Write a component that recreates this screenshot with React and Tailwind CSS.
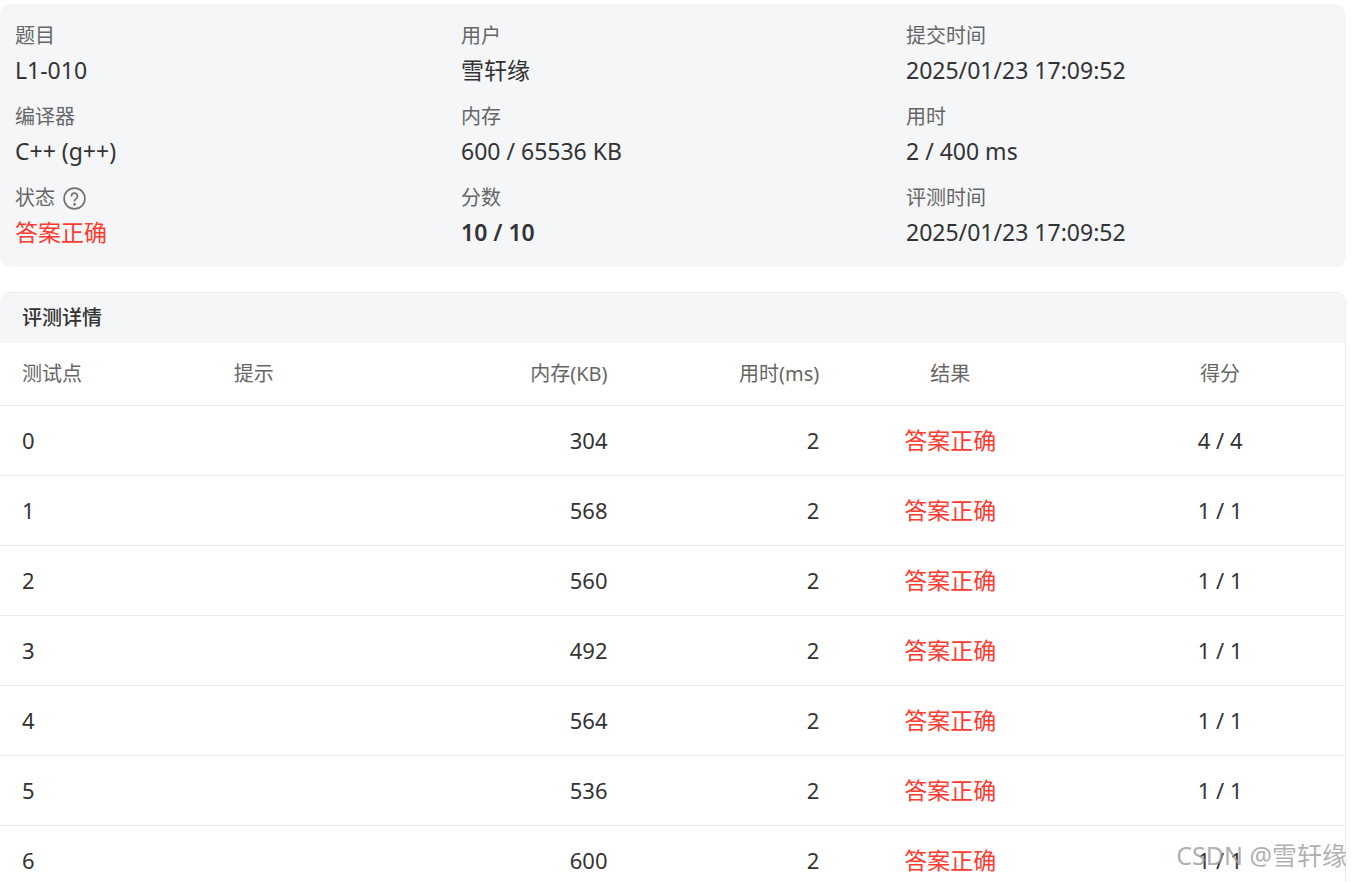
import React from 'react';

const FONT = { fontFamily: '"Noto Sans", "Noto Sans CJK SC", sans-serif' };

const info = [
  { label: '题目', value: 'L1-010' },
  { label: '用户', value: '雪轩缘' },
  { label: '提交时间', value: '2025/01/23 17:09:52' },
  { label: '编译器', value: 'C++ (g++)' },
  { label: '内存', value: '600 / 65536 KB' },
  { label: '用时', value: '2 / 400 ms' },
  { label: '状态', value: '答案正确', help: true, red: true },
  { label: '分数', value: '10 / 10', bold: true },
  { label: '评测时间', value: '2025/01/23 17:09:52' },
];

const rows = [
  { id: 0, mem: 304, time: 2, score: '4 / 4' },
  { id: 1, mem: 568, time: 2, score: '1 / 1' },
  { id: 2, mem: 560, time: 2, score: '1 / 1' },
  { id: 3, mem: 492, time: 2, score: '1 / 1' },
  { id: 4, mem: 564, time: 2, score: '1 / 1' },
  { id: 5, mem: 536, time: 2, score: '1 / 1' },
  { id: 6, mem: 600, time: 2, score: '1 / 1' },
];

const HelpIcon = () => (
  <svg width="25" height="25" viewBox="0 0 24 24" fill="none" stroke="#737373" strokeWidth="1.6" strokeLinecap="round">
    <circle cx="12" cy="12" r="10" />
    <path d="M9.1 9.4a2.9 2.9 0 0 1 5.8 0.6c0 1.9-2.9 2.3-2.9 4.3" />
    <circle cx="12" cy="17.7" r="0.55" fill="#737373" />
  </svg>
);

export default function App() {
  return (
    <div className="relative h-[882px] w-[1351px] overflow-hidden bg-white" style={FONT}>
      {/* submission summary */}
      <div className="mt-[4px] w-[1346px] rounded-[10px] bg-[#f5f6f8] pl-[15px] pt-[22px] pb-[21px]">
        <div className="grid grid-cols-[446px_445px_1fr] gap-y-[23px]">
          {info.map((it) => (
            <div key={it.label}>
              <div className="flex h-[20px] items-center gap-[7px] text-[20px] text-[#666]">
                {it.label}
                {it.help && <HelpIcon />}
              </div>
              <div
                className={`mt-[10px] h-[28px] text-[23px] leading-[28px] ${it.red ? 'text-[#ff3b30]' : 'text-[#333]'} ${it.bold ? 'font-semibold' : ''}`}
              >
                {it.value}
              </div>
            </div>
          ))}
        </div>
      </div>

      {/* judge details */}
      <div className="mt-[25px] w-[1346px] rounded-t-[10px] border border-l-0 border-[#ececec]">
        <div className="flex h-[50px] items-center rounded-t-[10px] bg-[#f5f6f8] pl-[22px] text-[20px] font-medium text-[#333]">
          评测详情
        </div>
        <div className="flex h-[63px] items-center border-b border-[#e8e8e8] text-[20px] text-[#666]">
          <div className="w-[212px] pl-[22px]">测试点</div>
          <div className="w-[208px] pl-[22px]">提示</div>
          <div className="w-[210px] pr-[22px] text-right">内存(KB)</div>
          <div className="w-[212px] pr-[22px] text-right">用时(ms)</div>
          <div className="w-[218px] text-center">结果</div>
          <div className="w-[286px] pl-[36px] text-center">得分</div>
        </div>
        {rows.map((r) => (
          <div key={r.id} className="flex h-[70px] items-center border-b border-[#e8e8e8] text-[22px] text-[#333]">
            <div className="w-[212px] pl-[22px]">{r.id}</div>
            <div className="w-[208px] pl-[22px]"></div>
            <div className="w-[210px] pr-[22px] text-right">{r.mem}</div>
            <div className="w-[212px] pr-[22px] text-right">{r.time}</div>
            <div className="w-[218px] text-center text-[23px] text-[#ff3b30]">答案正确</div>
            <div className="w-[286px] pl-[36px] text-center">{r.score}</div>
          </div>
        ))}
      </div>

      <div className="absolute right-[4px] bottom-[8px] text-[25px] text-[#9a9a9a]/80">CSDN @雪轩缘</div>
    </div>
  );
}
